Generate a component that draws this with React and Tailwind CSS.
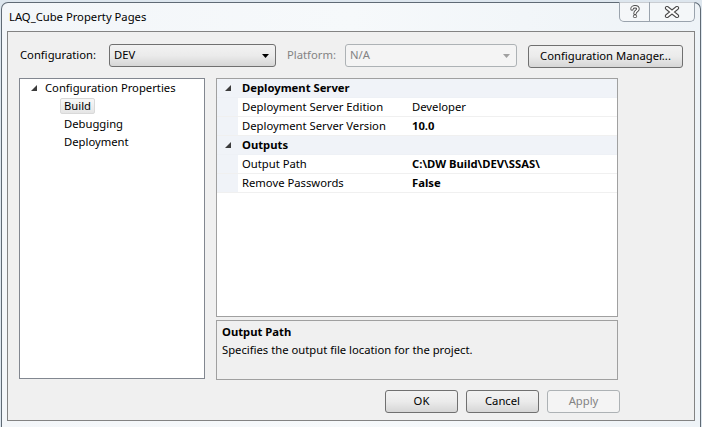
import React from 'react'

const font = "font-['Noto_Sans',sans-serif] text-[11.25px] text-black"

function Expander({ className = '' }) {
  return (
    <svg width="6" height="6" viewBox="0 0 6 6" className={className}>
      <polygon points="6,0 6,6 0,6" fill="#3c3c3c" />
    </svg>
  )
}

function Arrow({ color = '#000' }) {
  return (
    <svg width="7" height="4" viewBox="0 0 7 4">
      <polygon points="0,0 7,0 3.5,4" fill={color} />
    </svg>
  )
}

function Combo({ value, width, disabled }) {
  return (
    <div
      className={`flex h-[23px] items-center justify-between rounded-[3px] border pl-[4px] pr-[6px] ${width} ${
        disabled
          ? 'border-[#adb2b5] bg-[#f4f4f4] text-[#838383]'
          : 'border-[#707070] bg-gradient-to-b from-[#f2f2f2] via-[#ebebeb] to-[#d6d6d6]'
      }`}
    >
      <span>{value}</span>
      <Arrow color={disabled ? '#a0a0a0' : '#000'} />
    </div>
  )
}

function Button({ children, disabled, className = '' }) {
  return (
    <button
      type="button"
      className={`flex h-[23px] w-[73px] items-center justify-center rounded-[3px] border ${
        disabled
          ? 'border-[#adb2b5] bg-[#f4f4f4] text-[#838383]'
          : 'border-[#707070] bg-gradient-to-b from-[#f2f2f2] via-[#ebebeb] to-[#d6d6d6]'
      } ${className}`}
    >
      {children}
    </button>
  )
}

const sections = [
  {
    title: 'Deployment Server',
    rows: [
      ['Deployment Server Edition', 'Developer', false],
      ['Deployment Server Version', '10.0', true],
    ],
  },
  {
    title: 'Outputs',
    rows: [
      ['Output Path', 'C:\\DW Build\\DEV\\SSAS\\', true],
      ['Remove Passwords', 'False', true],
    ],
  },
]

function PropertyGrid() {
  return (
    <div className="h-[239px] w-[402px] border border-[#a0a0a0] bg-white">
      {sections.map((section) => (
        <div key={section.title}>
          <div className="flex h-[19px] items-center border-b border-[#eef1f6] bg-[#f0f3f8]">
            <div className="flex w-[21px] justify-center">
              <Expander />
            </div>
            <span className="pl-[4px] font-bold">{section.title}</span>
          </div>
          {section.rows.map(([name, value, bold]) => (
            <div key={name} className="flex h-[19px] items-center border-b border-[#f0f0f0]">
              <div className="h-full w-[21px] bg-[#f0f3f8]" />
              <span className="w-[174px] pl-[4px]">{name}</span>
              <span className={bold ? 'font-bold' : ''}>{value}</span>
            </div>
          ))}
        </div>
      ))}
    </div>
  )
}

function Tree() {
  return (
    <div className="h-[301px] w-[186px] border border-[#828790] bg-white">
      <div className="flex h-[18px] items-center pl-[11px]">
        <Expander />
        <span className="pl-[8px]">Configuration Properties</span>
      </div>
      <div className="flex h-[18px] items-center pl-[40px]">
        <span className="rounded-[2px] border border-[#d9d9d9] bg-gradient-to-b from-[#f8f8f8] to-[#e5e5e5] px-[3px] leading-[14px]">
          Build
        </span>
      </div>
      <div className="flex h-[18px] items-center pl-[44px]">Debugging</div>
      <div className="flex h-[18px] items-center pl-[44px]">Deployment</div>
    </div>
  )
}

function CaptionButtons() {
  return (
    <div className="absolute right-[5px] top-[-1px] flex h-[20px] w-[76px] overflow-hidden rounded-b-[5px] border border-t-0 border-[#9aa3ad] bg-[#f6f8fa]/70">
      <div className="flex w-[30px] items-center justify-center border-r border-[#9aa3ad]">
        <svg width="10" height="13" viewBox="0 0 10 13">
          <path d="M2 4 C2 1 8 1 8 4 C8 6 5 6 5 8.5" fill="none" stroke="#4a4a4a" strokeWidth="3.4" strokeLinecap="round" />
          <path d="M2 4 C2 1 8 1 8 4 C8 6 5 6 5 8.5" fill="none" stroke="#fff" strokeWidth="1.6" strokeLinecap="round" />
          <circle cx="5" cy="11.3" r="1.6" fill="#fff" stroke="#4a4a4a" strokeWidth="0.9" />
        </svg>
      </div>
      <div className="flex flex-1 items-center justify-center">
        <svg width="16" height="12" viewBox="0 0 16 12">
          <path d="M3 2 L13 10 M13 2 L3 10" stroke="#4a4a4a" strokeWidth="4.2" strokeLinecap="round" />
          <path d="M3 2 L13 10 M13 2 L3 10" stroke="#fff" strokeWidth="2.2" strokeLinecap="round" />
        </svg>
      </div>
    </div>
  )
}

export default function App() {
  return (
    <div className={`h-[427px] w-[702px] overflow-hidden bg-[#dde6ee] ${font}`}>
      <div className="relative ml-[1px] mt-[2px] flex h-[425px] w-[700px] flex-col rounded-t-[7px] border border-b-0 border-[#5f6a75] bg-gradient-to-r from-[#f3f6f9] via-[#f6f9fb] to-[#eef3f7] px-[5px]">
        <div className="h-[28px] pl-[2px] pt-[7px] leading-[14px]">LAQ_Cube Property Pages</div>
        <CaptionButtons />

        <div className="h-[390px] w-[688px] border border-[#838383] bg-[#f0f0f0] pl-[11px] pt-[12px]">
          <div className="flex items-start">
            <div className="flex h-[23px] w-[90px] items-center pl-[1px]">Configuration:</div>
            <Combo value="DEV" width="w-[167px]" />
            <div className="ml-[11px] flex h-[23px] w-[58px] items-center text-[#838383]">Platform:</div>
            <Combo value="N/A" width="w-[172px]" disabled />
            <button
              type="button"
              className="ml-[11px] mt-[1px] flex h-[23px] w-[155px] items-center justify-center rounded-[3px] border border-[#707070] bg-gradient-to-b from-[#f2f2f2] via-[#ebebeb] to-[#d6d6d6]"
            >
              Configuration Manager...
            </button>
          </div>

          <div className="mt-[10px] flex items-start">
            <Tree />
            <div className="ml-[11px] flex flex-col">
              <PropertyGrid />
              <div className="mt-[3px] h-[60px] w-[402px] border border-[#a0a0a0] bg-[#f0f0f0] pl-[5px] pt-[2px] leading-[18px]">
                <div className="font-bold">Output Path</div>
                <div>Specifies the output file location for the project.</div>
              </div>
            </div>
          </div>

          <div className="ml-[366px] mt-[10px] flex gap-[8px]">
            <Button>OK</Button>
            <Button>Cancel</Button>
            <Button disabled>Apply</Button>
          </div>
        </div>
      </div>
    </div>
  )
}
